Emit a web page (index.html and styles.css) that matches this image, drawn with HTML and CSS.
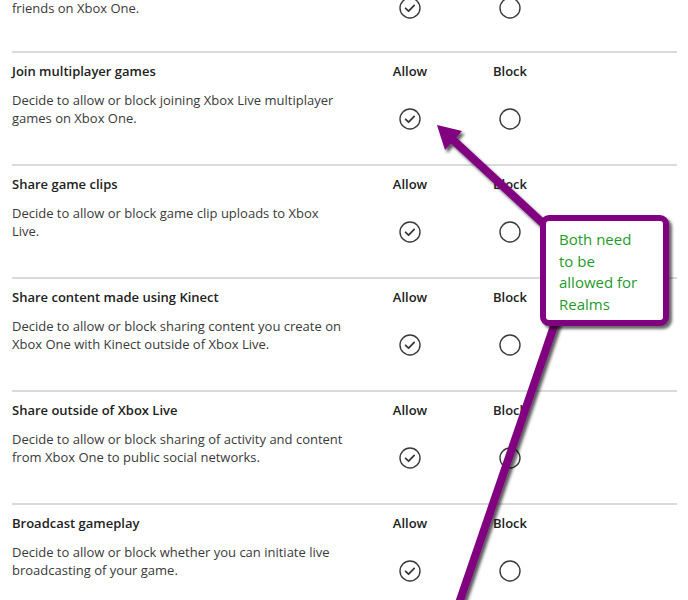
FILE: index.html
```html
<!DOCTYPE html>
<html>
<head>
<meta charset="utf-8">
<link rel="stylesheet" href="styles.css">
</head>
<body>
<div class="page">
  <div class="list">
    <div class="row partial">
      <div class="text"><p class="desc">friends on Xbox One.</p></div>
      <div class="choice"><svg class="radio" viewBox="0 0 22 22"><circle cx="11" cy="11" r="10"/><path d="M6.6 11.3 L9.6 14.2 L15.2 8.4"/></svg></div>
      <div class="choice"><svg class="radio" viewBox="0 0 22 22"><circle cx="11" cy="11" r="10"/></svg></div>
    </div>

    <div class="row">
      <div class="text">
        <h3 class="title">Join multiplayer games</h3>
        <p class="desc">Decide to allow or block joining Xbox Live multiplayer games on Xbox One.</p>
      </div>
      <div class="choice"><span class="label">Allow</span><svg class="radio" viewBox="0 0 22 22"><circle cx="11" cy="11" r="10"/><path d="M6.6 11.3 L9.6 14.2 L15.2 8.4"/></svg></div>
      <div class="choice"><span class="label">Block</span><svg class="radio" viewBox="0 0 22 22"><circle cx="11" cy="11" r="10"/></svg></div>
    </div>

    <div class="row">
      <div class="text">
        <h3 class="title">Share game clips</h3>
        <p class="desc">Decide to allow or block game clip uploads to Xbox Live.</p>
      </div>
      <div class="choice"><span class="label">Allow</span><svg class="radio" viewBox="0 0 22 22"><circle cx="11" cy="11" r="10"/><path d="M6.6 11.3 L9.6 14.2 L15.2 8.4"/></svg></div>
      <div class="choice"><span class="label">Block</span><svg class="radio" viewBox="0 0 22 22"><circle cx="11" cy="11" r="10"/></svg></div>
    </div>

    <div class="row">
      <div class="text">
        <h3 class="title">Share content made using Kinect</h3>
        <p class="desc">Decide to allow or block sharing content you create on Xbox One with Kinect outside of Xbox Live.</p>
      </div>
      <div class="choice"><span class="label">Allow</span><svg class="radio" viewBox="0 0 22 22"><circle cx="11" cy="11" r="10"/><path d="M6.6 11.3 L9.6 14.2 L15.2 8.4"/></svg></div>
      <div class="choice"><span class="label">Block</span><svg class="radio" viewBox="0 0 22 22"><circle cx="11" cy="11" r="10"/></svg></div>
    </div>

    <div class="row">
      <div class="text">
        <h3 class="title">Share outside of Xbox Live</h3>
        <p class="desc">Decide to allow or block sharing of activity and content from Xbox One to public social networks.</p>
      </div>
      <div class="choice"><span class="label">Allow</span><svg class="radio" viewBox="0 0 22 22"><circle cx="11" cy="11" r="10"/><path d="M6.6 11.3 L9.6 14.2 L15.2 8.4"/></svg></div>
      <div class="choice"><span class="label">Block</span><svg class="radio" viewBox="0 0 22 22"><circle cx="11" cy="11" r="10"/></svg></div>
    </div>

    <div class="row">
      <div class="text">
        <h3 class="title">Broadcast gameplay</h3>
        <p class="desc">Decide to allow or block whether you can initiate live broadcasting of your game.</p>
      </div>
      <div class="choice"><span class="label">Allow</span><svg class="radio" viewBox="0 0 22 22"><circle cx="11" cy="11" r="10"/><path d="M6.6 11.3 L9.6 14.2 L15.2 8.4"/></svg></div>
      <div class="choice"><span class="label">Block</span><svg class="radio" viewBox="0 0 22 22"><circle cx="11" cy="11" r="10"/></svg></div>
    </div>
  </div>

  <svg class="annotation" viewBox="0 0 688 600" width="688" height="600">
    <defs>
      <filter id="shadow" x="-20%" y="-20%" width="140%" height="140%">
        <feDropShadow dx="2.5" dy="3" stdDeviation="1.4" flood-color="#000" flood-opacity="0.65"/>
      </filter>
    </defs>
    <g filter="url(#shadow)" fill="#800080" stroke="#800080">
      <line x1="452" y1="139" x2="548" y2="228" stroke-width="8"/>
      <polygon points="437,125 462,131 445,150" stroke="none"/>
      <line x1="556" y1="320" x2="458" y2="606" stroke-width="8"/>
    </g>
  </svg>

  <div class="callout">Both need to be allowed for Realms</div>
</div>
</body>
</html>
```

FILE: styles.css
```css
html, body {
  margin: 0;
  padding: 0;
  background: #ffffff;
}

.page {
  position: relative;
  width: 688px;
  height: 600px;
  overflow: hidden;
  font-family: "Open Sans", "Noto Sans", "Liberation Sans", sans-serif;
  color: #333333;
}

.list {
  margin-left: 12px;
  width: 665px;
}

.row {
  display: grid;
  grid-template-columns: 348px 100px 100px;
  box-sizing: border-box;
  height: 113px;
  padding-top: 9px;
  border-top: 2px solid #dadada;
}

.row.partial {
  height: 51px;
  padding-top: 0;
  border-top: none;
}

.title {
  margin: 0;
  font-size: 13px;
  line-height: 18px;
  font-weight: 600;
  color: #222222;
}

.desc {
  margin: 11px 0 0;
  width: 334px;
  font-size: 13px;
  line-height: 18px;
  color: #3a3a3a;
}

.row.partial .desc {
  margin-top: -1px;
}

.choice {
  display: flex;
  flex-direction: column;
  align-items: center;
}

.label {
  font-size: 13px;
  line-height: 18px;
  font-weight: 600;
  color: #222222;
}

.radio {
  width: 22px;
  height: 22px;
  margin-top: 28px;
  fill: none;
  stroke: #3a3a3a;
  stroke-width: 1.4;
}

.radio path {
  stroke-width: 1.8;
  stroke-linecap: round;
  stroke-linejoin: round;
}

.row.partial .radio {
  margin-top: -3px;
}

.annotation {
  position: absolute;
  left: 0;
  top: 0;
}

.callout {
  position: absolute;
  left: 540px;
  top: 215px;
  width: 129px;
  height: 111px;
  box-sizing: border-box;
  border: 6px solid #800080;
  border-radius: 9px;
  background: #ffffff;
  box-shadow: 3px 3px 3px rgba(0, 0, 0, 0.6);
  padding: 8px 14px 0 13px;
  font-family: "Open Sans", "Noto Sans", sans-serif;
  font-size: 15px;
  line-height: 21.5px;
  color: #1f9a2c;
}
```
